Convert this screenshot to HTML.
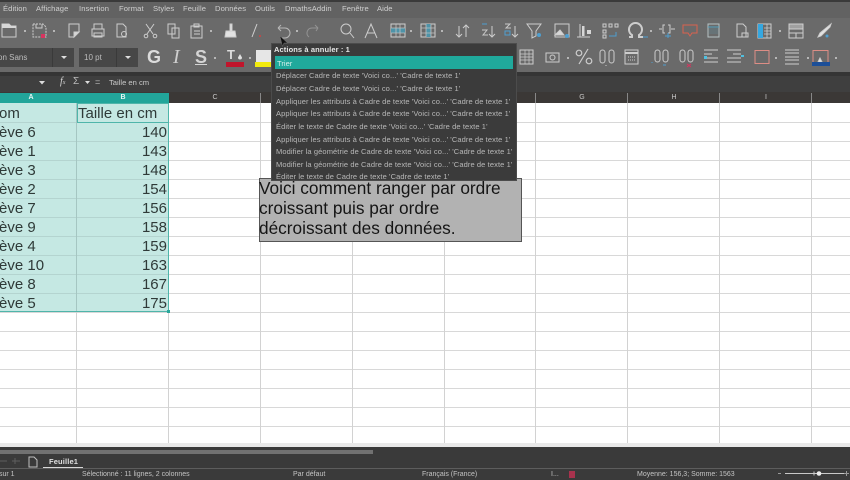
<!DOCTYPE html>
<html lang="fr"><head><meta charset="utf-8"><style>
*{box-sizing:border-box}
html,body{margin:0;padding:0;width:850px;height:480px;overflow:hidden;background:#fff;font-family:"Liberation Sans",sans-serif}
.w{position:absolute;left:0;top:0;width:850px;height:480px;overflow:hidden;filter:blur(.35px)}
.a{position:absolute;white-space:nowrap}
.m{top:3px;font-size:7.6px;color:#cfcfcf;line-height:12px;letter-spacing:.1px}
.r{height:1px;left:0;width:850px;background:#d8d8d8}
.c{width:1px;top:103px;height:341px;background:#d2d2d2}
.h{top:92px;height:11px;font-size:7px;line-height:12px;color:#c8c8c8;text-align:center;width:92px}
.n{font-size:15px;color:#2f3a38;line-height:21px}
.u{left:276px;font-size:7.5px;color:#b8b8b8;line-height:12px;letter-spacing:.1px}
.s{top:470px;font-size:7px;color:#c4c4c4;line-height:9px}
</style></head><body><div class="w">
<div class="a" style="left:0;top:0;width:850px;height:72px;background:#6a6a6a"></div>
<div class="a" style="left:0;top:0;width:850px;height:2px;background:#3a3a3a"></div>
<div class="a" style="left:0;top:2px;width:850px;height:16px;background:#626262"></div>
<div class="a m" style="left:3px">Édition</div><div class="a m" style="left:36px">Affichage</div><div class="a m" style="left:79px">Insertion</div><div class="a m" style="left:119px">Format</div><div class="a m" style="left:153px">Styles</div><div class="a m" style="left:183px">Feuille</div><div class="a m" style="left:215px">Données</div><div class="a m" style="left:255px">Outils</div><div class="a m" style="left:285px">DmathsAddin</div><div class="a m" style="left:342px">Fenêtre</div><div class="a m" style="left:377px">Aide</div>

<svg class="a" style="left:0;top:18px" width="850" height="54" viewBox="0 18 850 54" fill="none" stroke="#cdcdcd" stroke-width="1">
<path d="M2 24h7l2 2h5v11H2z"/><path d="M2 24h7l2 2h5v2H2z" fill="#d6d6d6" stroke="none"/>
<path d="M33 24h10l3 3v10H33z" stroke-dasharray="2 1"/><path d="M36 24v4h6v-4"/><rect x="41" y="34" width="4" height="4" fill="#d8345f" stroke="none"/>
<path d="M69 24h10v8l-5 5h-5z"/><path d="M74 37v-5h5z" fill="#d6d6d6"/><path d="M92 29h12v7H92zM94 29v-5h8v5M94 33h8v4h-8z"/>
<path d="M117 24h6l3 3v10h-9z"/><circle cx="124" cy="34" r="2.5"/>
<path d="M146 24l7 10M154 24l-7 10"/><circle cx="146" cy="36" r="1.8"/><circle cx="155" cy="36" r="1.8"/>
<path d="M168 24h7v10h-7zM172 28h7v10h-7z"/><path d="M191 26h11v12h-11zM194 24h5v3h-5zM194 31h6M194 34h6"/>
<path d="M225 37h11l-1-6h-9z" fill="#e2e2e2"/><path d="M230 31v-7h2v7" fill="#e2e2e2"/>
<path d="M252 37l5-13" stroke="#cfcfcf"/><circle cx="260" cy="36" r="1" fill="#c44" stroke="none"/>
<path d="M278 28h7a4.500 4.500 0 0 1 0 10h-3M278 28l3-3M278 28l3 3" stroke="#b8b8b8"/>
<path d="M318 28h-6a5 5 0 0 0-3 9M318 28l-3-3M318 28l-2 3" stroke="#939393"/>
<circle cx="346" cy="29" r="5"/><path d="M350 33l4 5"/>
<path d="M365 38l6-14 6 14M367 33h8"/>
<rect x="391" y="24" width="14" height="13" stroke="#d0d0d0"/><rect x="391" y="28" width="14" height="5" fill="#4e93a8" stroke="none"/><path d="M396 24v13M400 24v13M391 28h14M391 33h14" stroke="#c0c0c0" stroke-width=".8"/>
<rect x="421" y="24" width="14" height="13"/><rect x="426" y="24" width="5" height="13" fill="#4e93a8" stroke="none"/><path d="M426 24v13M431 24v13M421 28h14M421 33h14" stroke="#c0c0c0" stroke-width=".8"/>
<path d="M459 26v11M456 34l3 3 3-3M466 37V25M463 28l3-3 3 3"/>
<path d="M482 30h5l-4 5h5" stroke="#c8c8c8"/><path d="M492 26v11M489 34l3 3 3-3"/><path d="M482 24h5" stroke="#4f9fd0"/>
<path d="M505 24h5l-4 4h5" stroke="#c8c8c8"/><path d="M505 31h5v4h-5z" stroke="#4f9fd0"/><path d="M515 26v11M512 34l3 3 3-3"/>
<path d="M527 24h14l-5 7v5l-4 2v-7z"/><circle cx="539" cy="35" r="2" fill="#4f9fd0" stroke="none"/>
<rect x="555" y="24" width="14" height="13"/><path d="M555 35l5-5 4 5z" fill="#d6d6d6"/><circle cx="567" cy="36" r="2" fill="#4f9fd0" stroke="none"/>
<path d="M580 24v13M577 37h13"/><rect x="582" y="26" width="2.500" height="10" fill="#d6d6d6" stroke="none"/><rect x="587" y="30" width="4" height="4" fill="#d6d6d6" stroke="none"/>
<rect x="603" y="24" width="3" height="3"/><rect x="609" y="24" width="3" height="3"/><rect x="615" y="24" width="3" height="3"/><rect x="603" y="30" width="3" height="3"/><rect x="603" y="35" width="3" height="3"/><path d="M609 36h7v-4" stroke="#4f9fd0"/>
<path d="M629 37h3v-2a6.500 6.500 0 1 1 7 0v2h4" stroke-width="2"/><path d="M643 37h5" stroke="#4f9fd0"/>
<path d="M659 29h3M665 25h-2v8h2M668 25h2v8h-2M671 29h4"/><path d="M668 33v5M665 36h6" stroke="#4f9fd0"/>
<path d="M683 25h14v8h-5l-2 3-2-3h-5z" stroke="#d9614f"/>
<rect x="708" y="24" width="11" height="13" stroke="#b5c2c4"/><path d="M708 27h11" stroke="#53a2c0"/><rect x="709" y="28" width="9" height="6" fill="#677377" stroke="none"/>
<path d="M737 24h6l3 3v10h-9z"/><rect x="742" y="33" width="6" height="4"/>
<rect x="758" y="24" width="13" height="14"/><rect x="758" y="24" width="5" height="14" fill="#35a7e0" stroke="none"/><path d="M764 28h7M764 31h7M764 34h7M767 24v14" stroke-width=".8"/>
<rect x="789" y="24" width="14" height="14"/><path d="M789 29h14M789 33h14M796 33v5"/><rect x="789" y="24" width="14" height="5" fill="#d6d6d6" stroke="none" opacity=".5"/>
<path d="M818 37l2-4 11-9-1 3-9 9z" fill="#e4e4e4"/><circle cx="827" cy="36" r="1.500" fill="#4f9fd0" stroke="none"/>
<g fill="#cfcfcf" stroke="none"><circle cx="25" cy="31" r="1"/><circle cx="54" cy="31" r="1"/><circle cx="211" cy="31" r="1"/><circle cx="297" cy="31" r="1"/><circle cx="411" cy="31" r="1"/><circle cx="442" cy="31" r="1"/><circle cx="651" cy="31" r="1"/><circle cx="780" cy="31" r="1"/></g>
</svg>

<!-- format bar -->
<div class="a" style="left:0;top:48px;width:74px;height:19px;background:#474747"></div>
<div class="a" style="left:52px;top:48px;width:1px;height:19px;background:#3a3a3a"></div>
<div class="a" style="left:-2px;top:52px;font-size:8px;color:#bdbdbd;line-height:11px">on Sans</div>
<svg class="a" style="left:60px;top:55px" width="8" height="5"><path d="M1 1h6l-3 3z" fill="#ddd"/></svg>
<div class="a" style="left:79px;top:48px;width:59px;height:19px;background:#474747"></div>
<div class="a" style="left:116px;top:48px;width:1px;height:19px;background:#3a3a3a"></div>
<div class="a" style="left:84px;top:52px;font-size:8px;color:#bdbdbd;line-height:11px">10 pt</div>
<svg class="a" style="left:124px;top:55px" width="8" height="5"><path d="M1 1h6l-3 3z" fill="#ddd"/></svg>
<div class="a" style="left:147px;top:47px;font-size:18px;font-weight:bold;color:#dcdcdc;line-height:21px">G</div>
<div class="a" style="left:173px;top:47px;font-family:'Liberation Serif',serif;font-size:20px;font-style:italic;color:#cfcfcf;line-height:21px;font-weight:normal">I</div>
<div class="a" style="left:195px;top:47px;font-size:18px;font-weight:bold;color:#d4d4d4;line-height:20px;text-decoration:underline">S</div>
<div class="a" style="left:227px;top:46px;font-size:13px;color:#dcdcdc;line-height:18px;font-weight:bold">T</div>
<svg class="a" style="left:237px;top:53px" width="6" height="8"><path d="M3 1l2 3.500a2 2 0 1 1-4 0z" fill="#e0e0e0"/></svg>
<div class="a" style="left:226px;top:62px;width:18px;height:5px;background:#c0152c"></div>
<div class="a" style="left:256px;top:50px;width:15px;height:12px;background:#e6e6e6"></div>
<div class="a" style="left:255px;top:62px;width:16px;height:5px;background:#f2ea0c"></div>

<svg class="a" style="left:0;top:48px" width="850" height="22" viewBox="0 48 850 22" fill="none" stroke="#cdcdcd" stroke-width="1">
<rect x="520" y="50" width="13" height="14"/><path d="M520 54h13M520 57h13M520 60h13M525 50v14M529 50v14" stroke-width=".7"/>
<rect x="546" y="53" width="13" height="9"/><rect x="550" y="55" width="5" height="5" rx="2.500"/>
<path d="M579 64l9-15" stroke-width="1.200"/><circle cx="579" cy="53" r="2.800" stroke-width="1.200"/><circle cx="589" cy="61" r="2.800" stroke-width="1.200"/>
<rect x="600" y="50" width="5" height="13" rx="2.500"/><rect x="609" y="50" width="5" height="13" rx="2.500"/><path d="M606 65v1"/>
<rect x="625" y="50" width="13" height="14"/><path d="M625 53h13" stroke-width="2"/><path d="M628 57h7M628 60h7" stroke-dasharray="1 1"/>
<rect x="655" y="50" width="5" height="12" rx="2.500"/><rect x="663" y="50" width="5" height="12" rx="2.500"/><path d="M652 62v1M663 65h3" stroke="#4f9fd0"/>
<rect x="680" y="50" width="5" height="12" rx="2.500"/><rect x="688" y="50" width="5" height="12" rx="2.500"/><path d="M687 64l4 3M691 64l-4 3" stroke="#d8345f"/>
<path d="M704 50h14M704 54h8M704 58h14M704 62h14"/><rect x="704" y="56" width="3" height="3" fill="#4fc0e0" stroke="none"/>
<path d="M727 50h14M733 54h8M727 58h14M727 62h14"/><path d="M741 56h3" stroke="#4fc0e0" stroke-width="2"/>
<rect x="755" y="50.500" width="14" height="13" stroke="#dd8d85"/>
<path d="M785 50h14M785 53h14M785 57h14M785 60h14M785 64h14" stroke-width=".9"/>
<rect x="813" y="50.500" width="15" height="12" stroke="#dd8d85"/><path d="M818 62l2-4 2 4z" fill="#e6e6e6"/>
<g fill="#cfcfcf" stroke="none"><circle cx="568" cy="58" r="1"/><circle cx="776" cy="58" r="1"/><circle cx="808" cy="58" r="1"/><circle cx="836" cy="58" r="1"/><circle cx="215" cy="58" r="1"/><circle cx="250" cy="58" r="1"/></g>
</svg>
<div class="a" style="left:812px;top:62px;width:18px;height:4px;background:#1d4f98"></div>

<!-- formula bar -->
<div class="a" style="left:0;top:72px;width:850px;height:20px;background:#3f3f3f"></div>
<div class="a" style="left:0;top:72px;width:850px;height:4px;background:#353535"></div>
<svg class="a" style="left:38px;top:81px" width="8" height="5"><path d="M1 0h6l-3 3.500z" fill="#ddd"/></svg>
<div class="a" style="left:60px;top:76px;font-family:'Liberation Serif',serif;font-style:italic;font-size:10px;color:#d4d4d4;line-height:12px">f<span style="font-size:6px">x</span></div>
<div class="a" style="left:73px;top:76px;font-size:10px;color:#bcbcbc;line-height:12px">Σ</div>
<svg class="a" style="left:85px;top:81px" width="6" height="4"><path d="M0 0h5l-2.500 3z" fill="#ddd"/></svg>
<div class="a" style="left:95px;top:76px;font-size:9px;color:#bcbcbc;line-height:12px">=</div>
<div class="a" style="left:109px;top:77px;font-size:7.6px;color:#c8c8c8;line-height:11px">Taille en cm</div>

<!-- column headers -->
<div class="a" style="left:0;top:92px;width:850px;height:11px;background:#3b3836"></div>
<div class="a" style="left:0;top:93px;width:169px;height:10px;background:#22a59a"></div>
<div class="a h" style="left:-15px;color:#e8f5f3;font-weight:bold">A</div><div class="a h" style="left:77px;color:#e8f5f3;font-weight:bold">B</div><div class="a h" style="left:169px">C</div><div class="a h" style="left:536px">G</div><div class="a h" style="left:628px">H</div><div class="a h" style="left:720px">I</div>
<div class="a" style="left:260px;top:93px;width:1px;height:10px;background:#888"></div><div class="a" style="left:535px;top:93px;width:1px;height:10px;background:#888"></div><div class="a" style="left:627px;top:93px;width:1px;height:10px;background:#888"></div><div class="a" style="left:719px;top:93px;width:1px;height:10px;background:#888"></div><div class="a" style="left:811px;top:93px;width:1px;height:10px;background:#888"></div>

<!-- grid -->
<div class="a r" style="top:122px"></div><div class="a r" style="top:141px"></div><div class="a r" style="top:160px"></div><div class="a r" style="top:179px"></div><div class="a r" style="top:198px"></div><div class="a r" style="top:217px"></div><div class="a r" style="top:236px"></div><div class="a r" style="top:255px"></div><div class="a r" style="top:274px"></div><div class="a r" style="top:293px"></div><div class="a r" style="top:312px"></div><div class="a r" style="top:331px"></div><div class="a r" style="top:350px"></div><div class="a r" style="top:369px"></div><div class="a r" style="top:388px"></div><div class="a r" style="top:407px"></div><div class="a r" style="top:426px"></div>
<div class="a c" style="left:76px"></div><div class="a c" style="left:168px"></div><div class="a c" style="left:260px"></div><div class="a c" style="left:352px"></div><div class="a c" style="left:444px"></div><div class="a c" style="left:535px"></div><div class="a c" style="left:627px"></div><div class="a c" style="left:719px"></div><div class="a c" style="left:811px"></div>

<!-- selection -->
<div class="a" style="left:0;top:103px;width:168px;height:208px;background:#c5e8e3"></div>
<div class="a" style="left:0;top:122px;width:168px;height:1px;background:#b4d4d0"></div>
<div class="a" style="left:0;top:141px;width:168px;height:1px;background:#b4d4d0"></div><div class="a" style="left:0;top:160px;width:168px;height:1px;background:#b4d4d0"></div><div class="a" style="left:0;top:179px;width:168px;height:1px;background:#b4d4d0"></div><div class="a" style="left:0;top:198px;width:168px;height:1px;background:#b4d4d0"></div><div class="a" style="left:0;top:217px;width:168px;height:1px;background:#b4d4d0"></div><div class="a" style="left:0;top:236px;width:168px;height:1px;background:#b4d4d0"></div><div class="a" style="left:0;top:255px;width:168px;height:1px;background:#b4d4d0"></div><div class="a" style="left:0;top:274px;width:168px;height:1px;background:#b4d4d0"></div><div class="a" style="left:0;top:293px;width:168px;height:1px;background:#b4d4d0"></div>
<div class="a" style="left:76px;top:103px;width:1px;height:208px;background:#a5c6c2"></div>
<div class="a" style="left:0;top:311px;width:169px;height:1px;background:#4fb5aa"></div>
<div class="a" style="left:168px;top:103px;width:1px;height:209px;background:#4fb5aa"></div>
<div class="a" style="left:77px;top:103px;width:92px;height:20px;border:1px solid #4fb5aa"></div>
<div class="a" style="left:167px;top:310px;width:3px;height:3px;background:#2aa79b"></div>
<div class="a n" style="left:-1px;top:103px">om</div>
<div class="a n" style="left:78px;top:103px">Taille en cm</div>
<div class="a n" style="left:-1px;top:122px">ève 6</div><div class="a n" style="left:-1px;top:141px">ève 1</div><div class="a n" style="left:-1px;top:160px">ève 3</div><div class="a n" style="left:-1px;top:179px">ève 2</div><div class="a n" style="left:-1px;top:198px">ève 7</div><div class="a n" style="left:-1px;top:217px">ève 9</div><div class="a n" style="left:-1px;top:236px">ève 4</div><div class="a n" style="left:-1px;top:255px">ève 10</div><div class="a n" style="left:-1px;top:274px">ève 8</div><div class="a n" style="left:-1px;top:293px">ève 5</div>
<div class="a n" style="right:683px;top:122px">140</div><div class="a n" style="right:683px;top:141px">143</div><div class="a n" style="right:683px;top:160px">148</div><div class="a n" style="right:683px;top:179px">154</div><div class="a n" style="right:683px;top:198px">156</div><div class="a n" style="right:683px;top:217px">158</div><div class="a n" style="right:683px;top:236px">159</div><div class="a n" style="right:683px;top:255px">163</div><div class="a n" style="right:683px;top:274px">167</div><div class="a n" style="right:683px;top:293px">175</div>

<!-- text box -->
<div class="a" style="left:259px;top:178px;width:263px;height:64px;background:#b2b2b2;border:1px solid #555"></div>
<div class="a" style="left:259px;top:179px;font-size:17.25px;line-height:19.800px;color:#151515">Voici comment ranger par ordre<br>croissant puis par ordre<br>décroissant des données.</div>

<!-- dropdown -->
<div class="a" style="left:271px;top:43px;width:246px;height:138px;background:#3b3b3b;border:1px solid #4c4c4c;overflow:hidden">
<div class="a" style="left:2px;top:0;font-size:7.5px;font-weight:bold;color:#e6e6e6;line-height:12px;letter-spacing:.1px">Actions à annuler : 1</div>
<div class="a" style="left:3px;top:12px;width:238px;height:13px;background:#20a99c"></div>
<div class="a" style="left:5px;top:14px;font-size:7.6px;color:#d0efe9;line-height:12px">Trier</div>
</div>
<div class="a u" style="top:70px">Déplacer Cadre de texte 'Voici co...' 'Cadre de texte 1'</div>
<div class="a u" style="top:83px">Déplacer Cadre de texte 'Voici co...' 'Cadre de texte 1'</div>
<div class="a u" style="top:96px">Appliquer les attributs à Cadre de texte 'Voici co...' 'Cadre de texte 1'</div>
<div class="a u" style="top:108px">Appliquer les attributs à Cadre de texte 'Voici co...' 'Cadre de texte 1'</div>
<div class="a u" style="top:121px">Éditer le texte de Cadre de texte 'Voici co...' 'Cadre de texte 1'</div>
<div class="a u" style="top:134px">Appliquer les attributs à Cadre de texte 'Voici co...' 'Cadre de texte 1'</div>
<div class="a u" style="top:146px">Modifier la géométrie de Cadre de texte 'Voici co...' 'Cadre de texte 1'</div>
<div class="a u" style="top:159px">Modifier la géométrie de Cadre de texte 'Voici co...' 'Cadre de texte 1'</div>
<div class="a" style="left:272px;top:171px;width:244px;height:7.500px;overflow:hidden"><div class="a u" style="left:4px;top:0">Éditer le texte de Cadre de texte 'Cadre de texte 1'</div></div>

<!-- cursor -->
<svg class="a" style="left:279px;top:36px" width="10" height="11"><path d="M1 0l7.500 7-3.500 0-1.500 3.500z" fill="#111" stroke="#777" stroke-width=".4"/></svg>

<!-- bottom -->
<div class="a" style="left:0;top:443px;width:850px;height:4px;background:#e9e9e9"></div>
<div class="a" style="left:0;top:447px;width:850px;height:33px;background:#3a3a3a"></div>
<div class="a" style="left:0;top:449.500px;width:373px;height:4px;background:#717171"></div>
<div class="a" style="left:0;top:468px;width:850px;height:1px;background:#5d5d5d"></div>
<svg class="a" style="left:0;top:455px" width="40" height="13" fill="none" stroke="#5e5e5e"><path d="M0 6h7M12 6h8M15 3v6"/><path d="M29 2h5l3 3v7h-8z" stroke="#c0c0c0"/></svg>
<div class="a" style="left:49px;top:456px;font-size:7.500px;font-weight:bold;color:#e0e0e0;line-height:11px;letter-spacing:.15px">Feuille1</div>
<div class="a" style="left:43px;top:466.500px;width:40px;height:1.500px;background:#d8d8d8"></div>
<div class="a s" style="left:-1px">sur 1</div>
<div class="a s" style="left:82px">Sélectionné : 11 lignes, 2 colonnes</div>
<div class="a s" style="left:293px">Par défaut</div>
<div class="a s" style="left:422px">Français (France)</div>
<div class="a s" style="left:551px">I...</div>
<div class="a" style="left:569px;top:471px;width:6px;height:7px;background:#a8324d"></div>
<div class="a s" style="left:637px">Moyenne: 156,3; Somme: 1563</div>
<svg class="a" style="left:778px;top:469px" width="72" height="10"><path d="M7 4.500h60" stroke="#c8c8c8"/><path d="M0 4.500h3M66 4.500h5M68.500 2v5" stroke="#999"/><circle cx="41" cy="4.500" r="2.300" fill="#ececec"/><path d="M36 2.500v4" stroke="#ccc"/></svg>
</div></body></html>
